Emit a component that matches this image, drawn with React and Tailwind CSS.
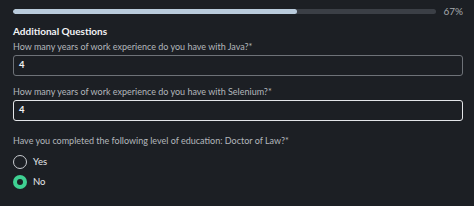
import React from 'react';

function Radio({ checked, label }) {
  return (
    <label className="flex items-center gap-[6px] h-[14px]">
      {checked ? (
        <span className="w-[14px] h-[14px] rounded-full bg-[#3fd092] flex items-center justify-center">
          <span className="w-[6px] h-[6px] rounded-full bg-[#1c1f24]" />
        </span>
      ) : (
        <span className="w-[14px] h-[14px] rounded-full border-[1.5px] border-[#c9ccd1]" />
      )}
      <span className="text-[9.5px] leading-[12px] text-[#e6e8eb]">{label}</span>
    </label>
  );
}

export default function App() {
  return (
    <div className="w-[474px] h-[206px] bg-[#1c1f24] pl-[13px] pr-[11px] pt-[5px] overflow-hidden" style={{ fontFamily: 'Lato, "Open Sans", sans-serif' }}>
      <div className="flex items-center gap-[7px] h-[12px]">
        <div className="flex-1 h-[5px] rounded-full bg-[#3b3f46] overflow-hidden">
          <div className="h-full w-[67%] bg-[#b9cbdc] rounded-full" />
        </div>
        <span className="text-[10px] leading-[12px] text-[#a5a9ae]">67%</span>
      </div>

      <h2 className="mt-[7px] text-[10px] font-bold text-[#f2f3f5] leading-[14px]">Additional Questions</h2>

      <div className="mt-[3px] text-[9px] text-[#b3b7bc] leading-[12px]">How many years of work experience do you have with Java?*</div>
      <div className="mt-[2px] h-[21px] border border-[#6e7278] rounded-[3px] flex items-center px-[5px]">
        <span className="text-[9.5px] font-bold text-[#f2f3f5]">4</span>
      </div>

      <div className="mt-[10px] text-[9px] text-[#b3b7bc] leading-[12px]">How many years of work experience do you have with Selenium?*</div>
      <div className="mt-[2px] h-[21px] border border-[#e3e5e8] rounded-[3px] flex items-center px-[5px]">
        <span className="text-[9.5px] font-bold text-[#f2f3f5]">4</span>
      </div>

      <div className="mt-[14px] text-[9px] text-[#b3b7bc] leading-[12px]">Have you completed the following level of education: Doctor of Law?*</div>
      <div className="mt-[8px] flex flex-col gap-[6px]">
        <Radio label="Yes" />
        <Radio checked label="No" />
      </div>
    </div>
  );
}
